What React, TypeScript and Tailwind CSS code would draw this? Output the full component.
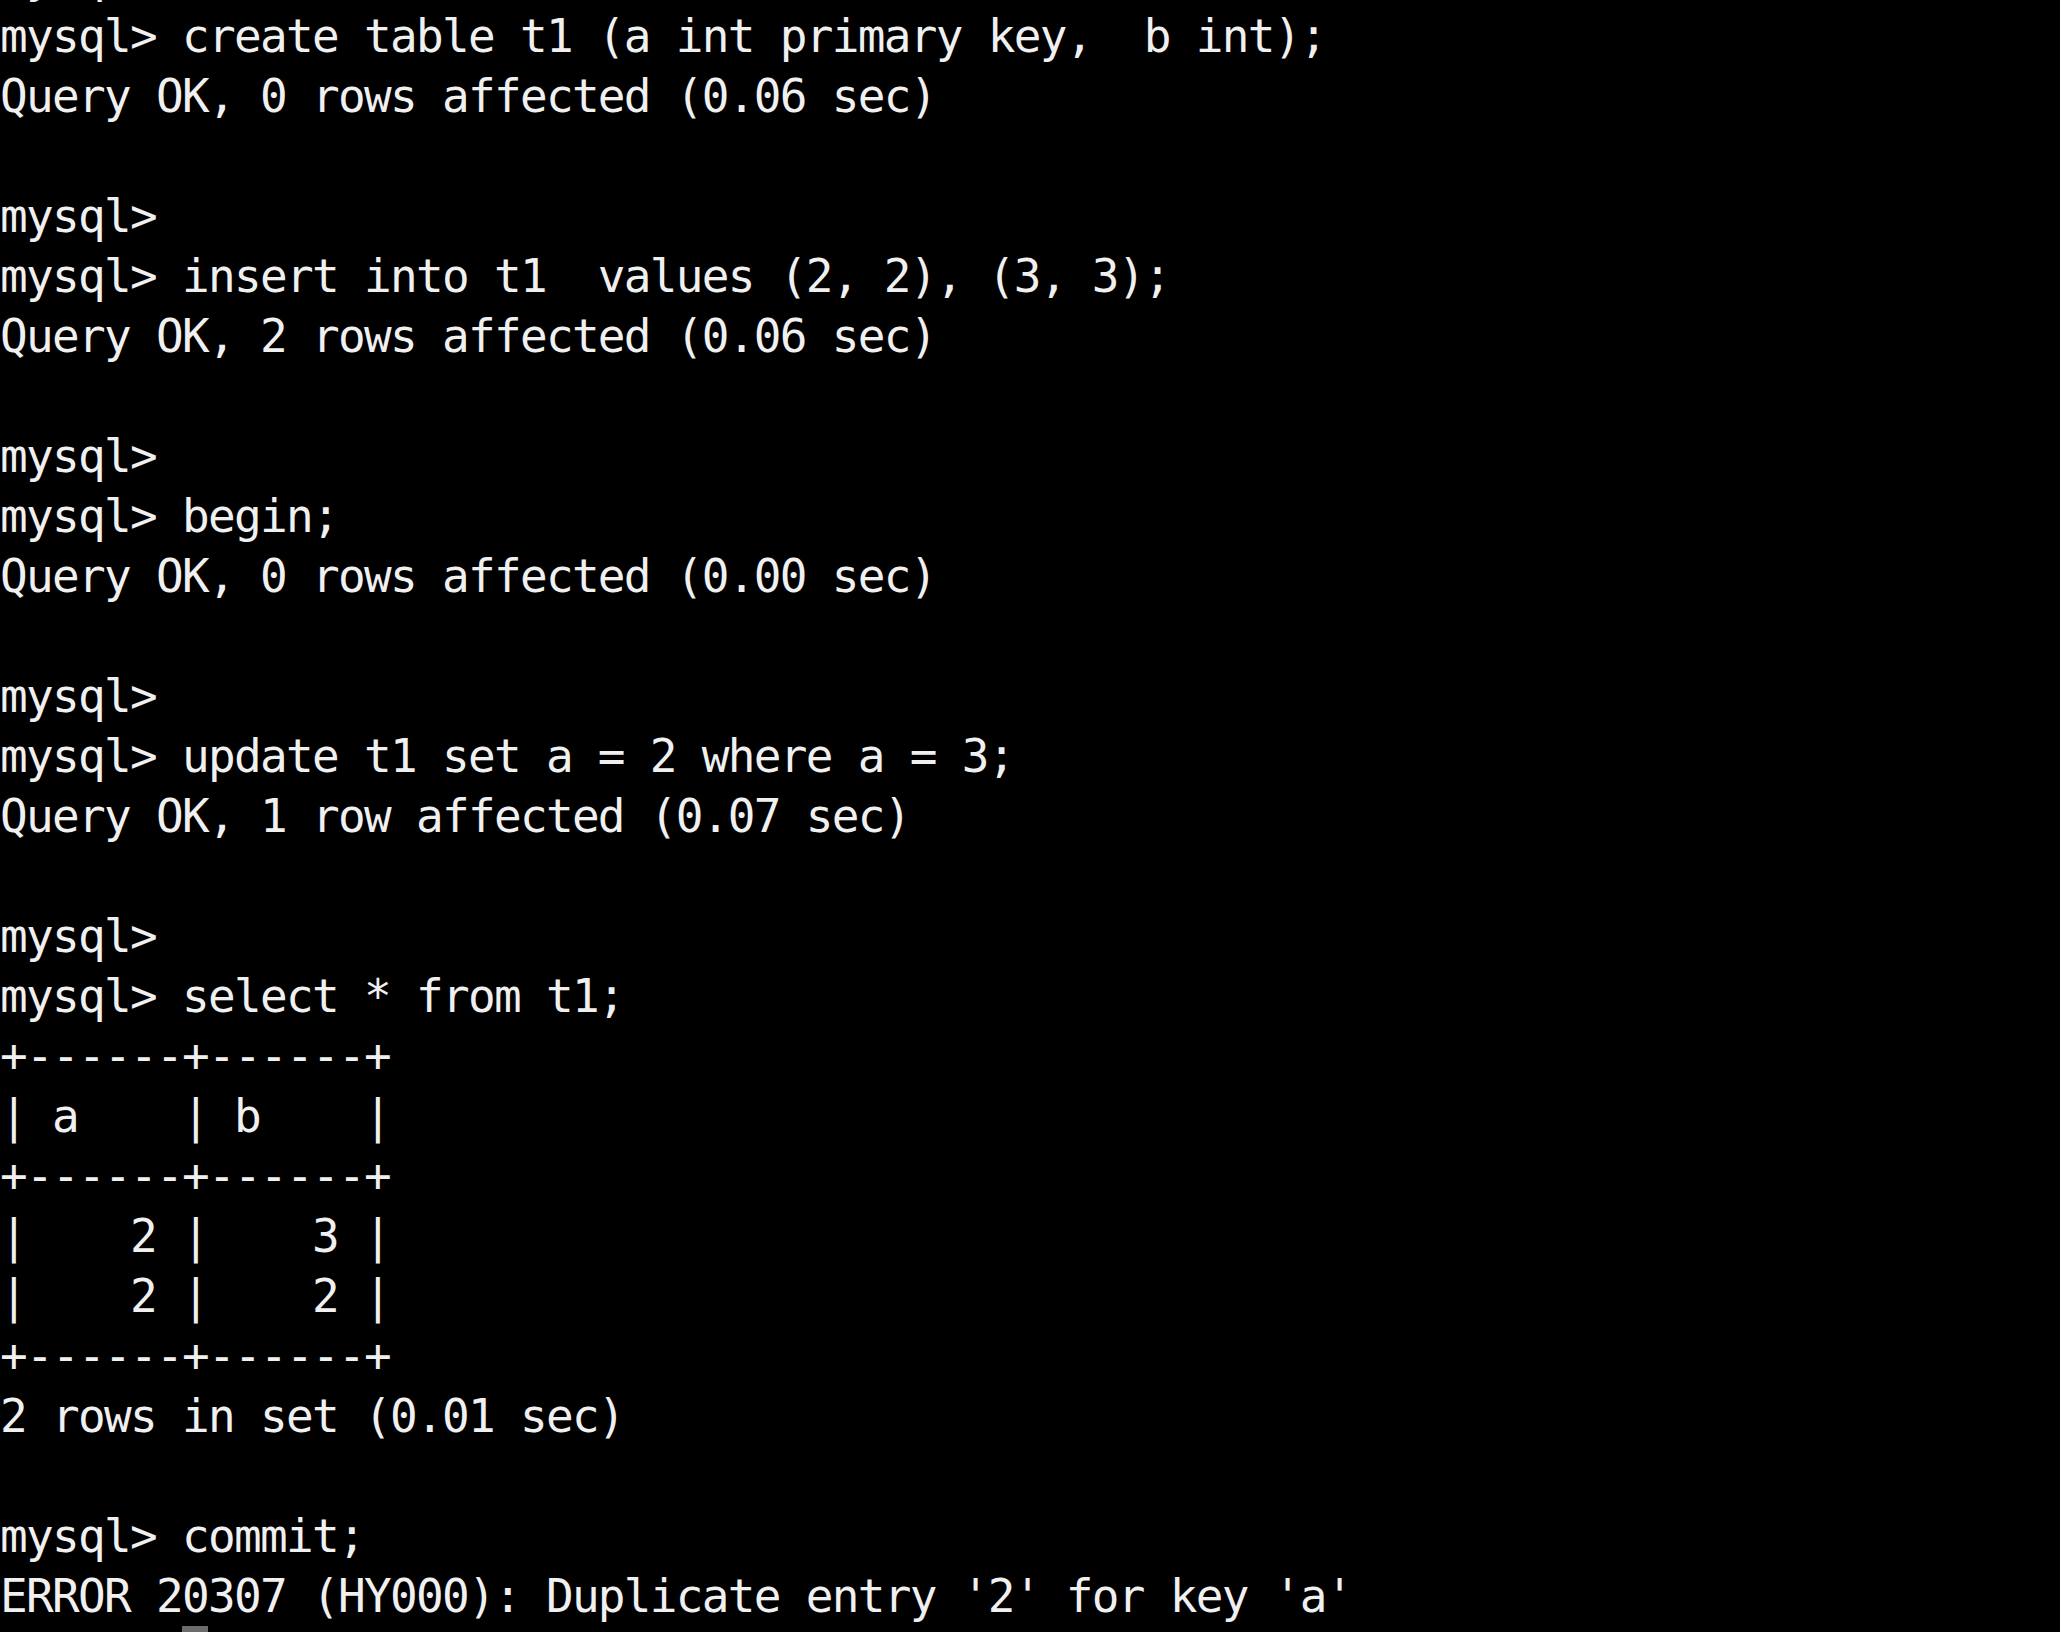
import React from "react";

const lines: string[] = [
  "mysql>",
  "mysql> create table t1 (a int primary key,  b int);",
  "Query OK, 0 rows affected (0.06 sec)",
  "",
  "mysql> ",
  "mysql> insert into t1  values (2, 2), (3, 3);",
  "Query OK, 2 rows affected (0.06 sec)",
  "",
  "mysql> ",
  "mysql> begin;",
  "Query OK, 0 rows affected (0.00 sec)",
  "",
  "mysql> ",
  "mysql> update t1 set a = 2 where a = 3;",
  "Query OK, 1 row affected (0.07 sec)",
  "",
  "mysql> ",
  "mysql> select * from t1;",
  "+------+------+",
  "| a    | b    |",
  "+------+------+",
  "|    2 |    3 |",
  "|    2 |    2 |",
  "+------+------+",
  "2 rows in set (0.01 sec)",
  "",
  "mysql> commit;",
  "ERROR 20307 (HY000): Duplicate entry '2' for key 'a'",
];

const App = () => {
  return (
    <div className="h-screen w-full overflow-hidden bg-black text-[#f0f0f0] font-['DejaVu_Sans_Mono',monospace] text-[46px] tracking-[-1.7px]">
      <div className="-mt-[54px] flex flex-col">
        {lines.map((line, index) => (
          <div key={index} className="h-[60px] leading-[60px] whitespace-pre">
            {line || " "}
          </div>
        ))}
        <div className="h-[60px] leading-[60px] whitespace-pre flex items-start">
          <span>mysql&gt; </span>
          <span className="inline-block w-[26px] h-[60px] bg-[#6b6b6b]" />
        </div>
      </div>
    </div>
  );
};

export default App;
